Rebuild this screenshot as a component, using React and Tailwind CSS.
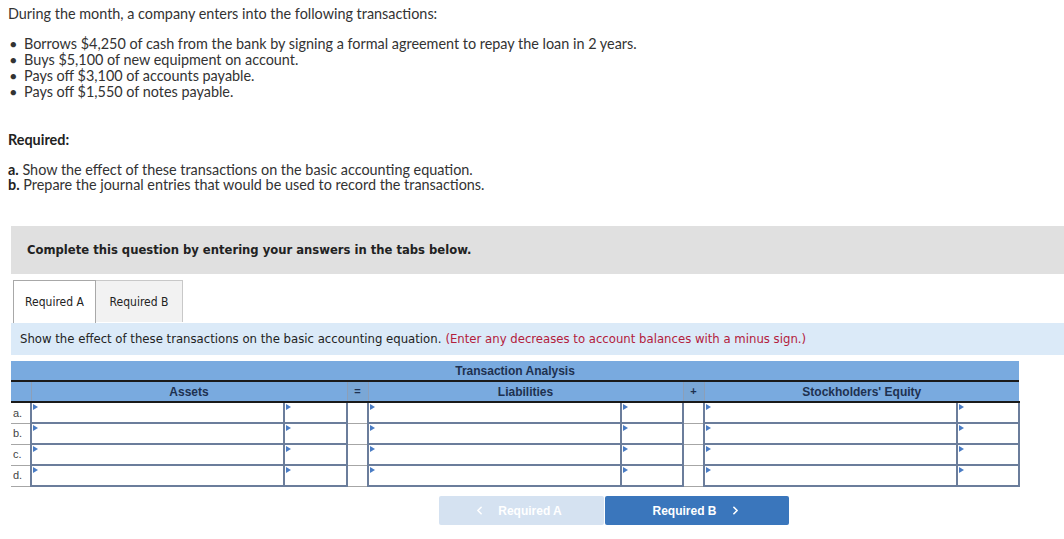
import { ChevronLeft, ChevronRight } from 'lucide-react'

const bullets = [
  'Borrows $4,250 of cash from the bank by signing a formal agreement to repay the loan in 2 years.',
  'Buys $5,100 of new equipment on account.',
  'Pays off $3,100 of accounts payable.',
  'Pays off $1,550 of notes payable.',
]

const rows = ['a.', 'b.', 'c.', 'd.']

function InputCell() {
  return (
    <td className="relative h-[21px] border-2 border-[#6b7d9b] bg-white p-0">
      <span className="absolute left-[1px] top-[1px] h-0 w-0 border-y-[3px] border-l-[5px] border-y-transparent border-l-[#4a7cc4]" />
    </td>
  )
}

function SignCell() {
  return <td className="h-[21px] border border-[#a6a6a6] bg-white p-0" />
}

export default function App() {
  return (
    <div className="min-h-screen bg-white pt-[6px] text-[#333]">
      {/* Question */}
      <div className="pl-[8px] font-['Lato',sans-serif] text-[14.4px] leading-[16px]">
        <p>During the month, a company enters into the following transactions:</p>
        <ul className="mt-[14px] pl-[2px]">
          {bullets.map(b => (
            <li key={b} className="flex items-center">
              <span className="w-[14px] text-[11px]">●</span>
              <span>{b}</span>
            </li>
          ))}
        </ul>
        <p className="mt-[32px] font-bold text-[#222]">Required:</p>
        <p className="mt-[14px] leading-[15px]"><b className="text-[#222]">a.</b> Show the effect of these transactions on the basic accounting equation.</p>
        <p className="leading-[15px]"><b className="text-[#222]">b.</b> Prepare the journal entries that would be used to record the transactions.</p>
      </div>

      {/* Instruction box */}
      <div className="ml-[11px] mt-[34px] flex h-[48px] items-center bg-[#e0e0e0] pl-[16px] font-['DejaVu_Sans_Condensed','Noto_Sans',sans-serif] text-[12.9px] font-bold text-[#222]">
        Complete this question by entering your answers in the tabs below.
      </div>

      {/* Tabs */}
      <div className="ml-[13px] mt-[6px] flex font-['DejaVu_Sans_Condensed','Noto_Sans',sans-serif] text-[12px] text-[#222]">
        <div className="flex h-[43px] w-[83px] items-center justify-center border border-b-0 border-[#a8a8a8] bg-white">Required A</div>
        <div className="flex h-[42px] w-[87px] items-center justify-center border border-b-0 border-l-0 border-[#c8c8c8] bg-[#f2f2f2]">Required B</div>
      </div>

      <div className="ml-[11px] flex h-[32px] items-center bg-[#dbeaf8] pl-[9px] font-['DejaVu_Sans_Condensed','Noto_Sans',sans-serif] text-[13px] text-[#222]">
        Show the effect of these transactions on the basic accounting equation.
        <span className="ml-[4px] text-[#b3203c]">(Enter any decreases to account balances with a minus sign.)</span>
      </div>

      {/* Table */}
      <table className="ml-[11px] mt-[6px] w-[1008px] table-fixed border-collapse font-['Liberation_Sans',Arial,sans-serif]">
        <colgroup>
          <col className="w-[20px]" />
          <col className="w-[253px]" />
          <col className="w-[63px]" />
          <col className="w-[21px]" />
          <col className="w-[253px]" />
          <col className="w-[62px]" />
          <col className="w-[21px]" />
          <col className="w-[253px]" />
          <col className="w-[62px]" />
        </colgroup>
        <thead className="text-[12px] font-bold text-[#1e3150]">
          <tr>
            <th colSpan={9} className="h-[20px] border-b-2 border-[#1a1a1a] bg-[#79aadf] p-0 text-center font-bold">Transaction Analysis</th>
          </tr>
          <tr>
            <th className="h-[21px] border-r border-b-2 border-r-[#8c9fb8] border-b-[#1a1a1a] bg-[#79aadf] p-0" />
            <th colSpan={2} className="border-r border-b-2 border-r-[#8c9fb8] border-b-[#1a1a1a] bg-[#79aadf] p-0 font-bold">Assets</th>
            <th className="border-r border-b-2 border-r-[#8c9fb8] border-b-[#1a1a1a] bg-[#7aa7d6] p-0 text-[11px] font-bold">=</th>
            <th colSpan={2} className="border-r border-b-2 border-r-[#8c9fb8] border-b-[#1a1a1a] bg-[#79aadf] p-0 font-bold">Liabilities</th>
            <th className="border-r border-b-2 border-r-[#8c9fb8] border-b-[#1a1a1a] bg-[#7aa7d6] p-0 text-[11px] font-bold">+</th>
            <th colSpan={2} className="border-b-2 border-b-[#1a1a1a] bg-[#79aadf] p-0 font-bold">Stockholders' Equity</th>
          </tr>
        </thead>
        <tbody>
          {rows.map(r => (
            <tr key={r}>
              <td className="h-[21px] border-b border-[#a6a6a6] bg-white p-0 pl-[2px] text-[11px] text-[#444]">{r}</td>
              <InputCell />
              <InputCell />
              <SignCell />
              <InputCell />
              <InputCell />
              <SignCell />
              <InputCell />
              <InputCell />
            </tr>
          ))}
        </tbody>
      </table>

      {/* Nav buttons */}
      <div className="ml-[439px] mt-[9px] flex gap-[1px] font-['Liberation_Sans',Arial,sans-serif] text-[12px] font-bold text-white">
        <div className="flex h-[29px] w-[165px] items-center justify-center gap-[12px] rounded-[2px] bg-[#d5e2f1] pr-[8px]">
          <ChevronLeft size={13} strokeWidth={3} />
          <span>Required A</span>
        </div>
        <div className="flex h-[29px] w-[184px] items-center justify-center gap-[12px] rounded-[2px] bg-[#3a76bc]">
          <span>Required B</span>
          <ChevronRight size={13} strokeWidth={3} />
        </div>
      </div>
    </div>
  )
}
